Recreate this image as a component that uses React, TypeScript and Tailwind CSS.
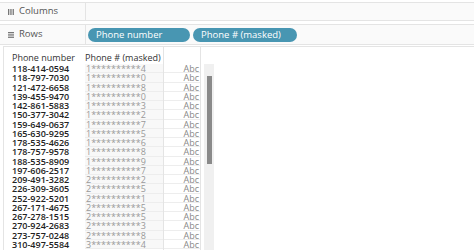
import React from "react";

const rows: [string, string][] = [
  ["118-414-0594", "1**********4"],
  ["118-797-7030", "1**********0"],
  ["121-472-6658", "1**********8"],
  ["139-455-9470", "1**********0"],
  ["142-861-5883", "1**********3"],
  ["150-377-3042", "1**********2"],
  ["159-649-0637", "1**********7"],
  ["165-630-9295", "1**********5"],
  ["178-535-4626", "1**********6"],
  ["178-757-9578", "1**********8"],
  ["188-535-8909", "1**********9"],
  ["197-606-2517", "1**********7"],
  ["209-491-3282", "2**********2"],
  ["226-309-3605", "2**********5"],
  ["252-922-5201", "2**********1"],
  ["267-171-4675", "2**********5"],
  ["267-278-1515", "2**********5"],
  ["270-924-2683", "2**********3"],
  ["273-757-0248", "2**********8"],
  ["310-497-5584", "3**********4"],
];

export default function App() {
  return (
    <div
      className="w-[474px] h-[250px] bg-white overflow-hidden whitespace-nowrap"
      style={{ fontFamily: '"Open Sans", "Liberation Sans", sans-serif' }}
    >
      <div className="pt-[2px]">
        {/* Columns shelf */}
        <div className="h-[19px] flex border-y border-[#e4e4e4] bg-[#fafafa]">
          <div className="w-[86px] border-r border-[#e4e4e4] flex items-center pl-[8px] gap-[5px] text-[9.5px] text-[#555]">
            <svg width="6" height="6" viewBox="0 0 6 6">
              <rect x="0" y="0" width="1.3" height="6" fill="#777" />
              <rect x="2.3" y="0" width="1.3" height="6" fill="#777" />
              <rect x="4.6" y="0" width="1.3" height="6" fill="#777" />
            </svg>
            <span>Columns</span>
          </div>
          <div className="flex-1" />
        </div>
        {/* Rows shelf */}
        <div className="mt-[3px] h-[21px] flex border-y border-[#e4e4e4] bg-[#fafafa]">
          <div className="w-[86px] border-r border-[#e4e4e4] flex items-center pl-[8px] gap-[5px] text-[9.5px] text-[#555]">
            <svg width="6" height="6" viewBox="0 0 6 6">
              <rect x="0" y="0" width="6" height="1.3" fill="#777" />
              <rect x="0" y="2.3" width="6" height="1.3" fill="#777" />
              <rect x="0" y="4.6" width="6" height="1.3" fill="#777" />
            </svg>
            <span>Rows</span>
          </div>
          <div className="flex items-center pl-[2px] gap-[3px]">
            <div className="w-[102px] h-[14px] rounded-full bg-[#4896b2] text-white text-[9.5px] leading-[14px] pl-[8px]">
              Phone number
            </div>
            <div className="w-[104px] h-[14px] rounded-full bg-[#4896b2] text-white text-[9.5px] leading-[14px] pl-[8px]">
              Phone # (masked)
            </div>
          </div>
        </div>
      </div>
      {/* View */}
      <div className="mt-[1px] h-[210px] border-t border-l border-[#e4e4e4] ml-[3px] flex">
        <div className="pl-[8px] flex text-[9px]">
          <div className="w-[151px]">
            <div className="h-[17px] flex items-end pb-[1px] text-[#333] leading-[10px]">
              <div className="w-[73px]">Phone number</div>
              <div>Phone # (masked)</div>
            </div>
            {rows.map(([p, m]) => (
              <div key={p} className="h-[9.25px] flex items-center leading-[9px]">
                <div className="w-[73px] text-[#222] font-semibold leading-[9px]">{p}</div>
                <div className="flex-1 h-full border-b border-[#ededed] bg-[#f8f8f8] text-[#999] text-[9px] pl-[1px] leading-[9px]">{m}</div>
              </div>
            ))}
          </div>
          <div className="w-[38px] border-l border-r border-[#e4e4e4]">
            <div className="h-[17px]" />
            {rows.map(([p]) => (
              <div key={p} className="h-[9.25px] border-b border-[#ededed] text-right pr-[1px] text-[#888] leading-[9px] text-[9px]">
                Abc
              </div>
            ))}
          </div>
        </div>
        <div className="ml-[3px] mt-[17px] w-[10px] h-[190px] bg-[#f0f0f0] flex justify-center pt-[12px]">
          <div className="w-[5px] h-[88px] bg-[#8a8a8a]" />
        </div>
      </div>
    </div>
  );
}
